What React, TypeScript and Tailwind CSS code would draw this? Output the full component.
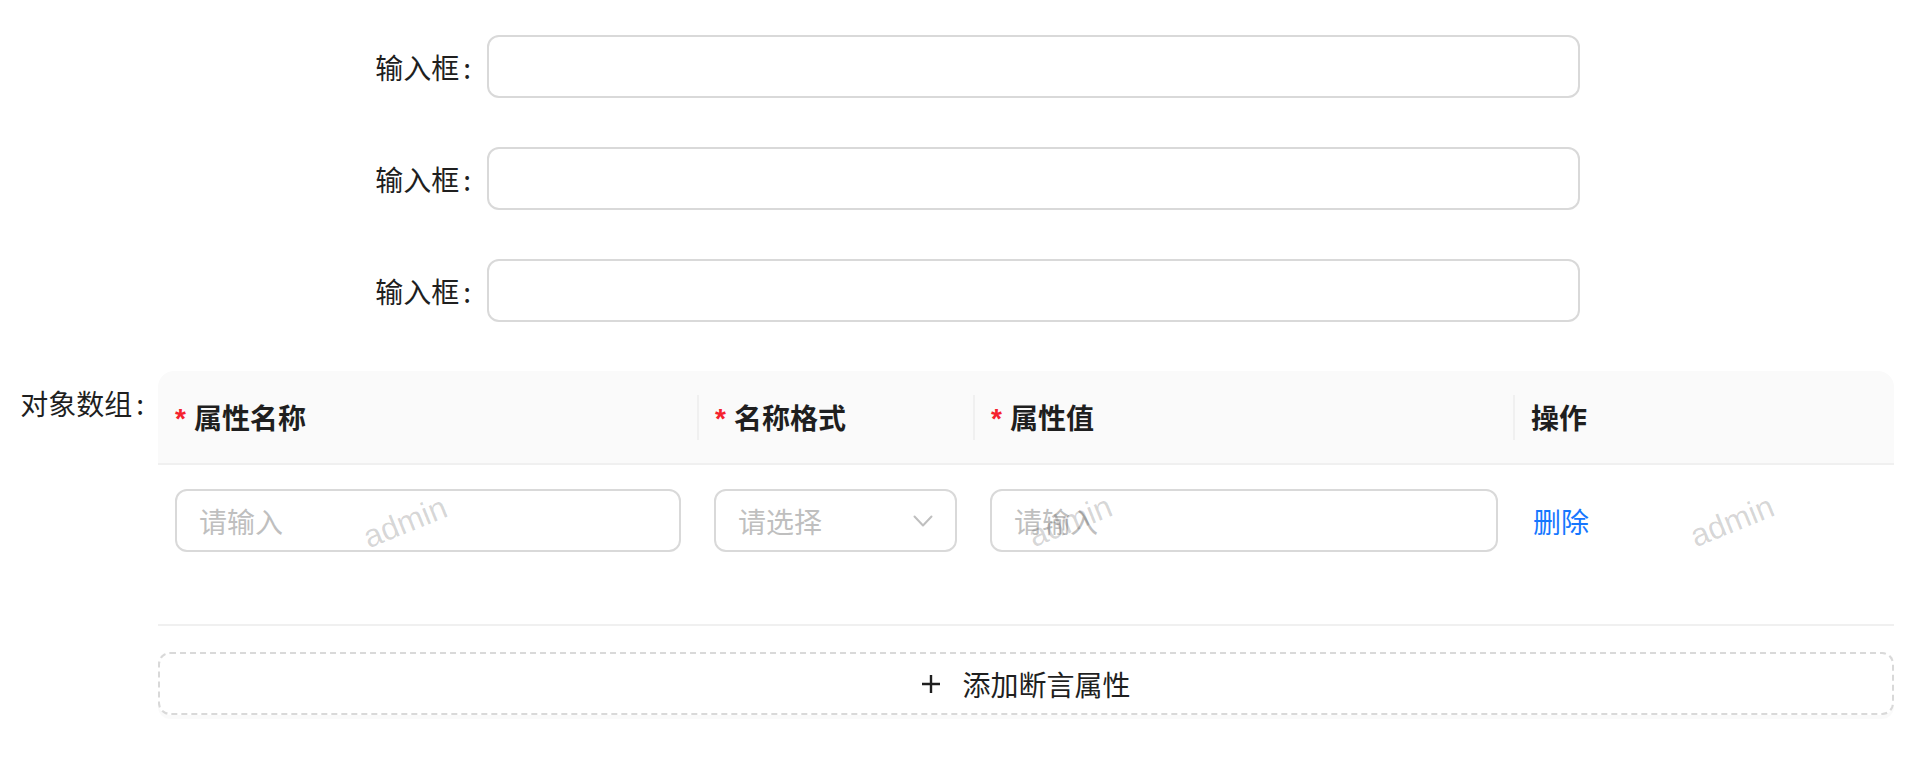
import React from 'react';

const font = "font-['Noto_Sans_CJK_SC','Liberation_Sans',sans-serif]";

function Star() {
  return (
    <span className="mr-[8px] translate-y-[2px] font-['Liberation_Sans',sans-serif] text-[28px] font-bold leading-none text-[#f5222d]">
      *
    </span>
  );
}

function HeadDivider() {
  return <div className="h-[45px] w-[2px] shrink-0 bg-[#f0f0f0]" />;
}

function Watermark({ left, top }: { left: number; top: number }) {
  return (
    <span
      className="pointer-events-none absolute -translate-x-1/2 -translate-y-1/2 rotate-[-22deg] select-none font-['Liberation_Sans',sans-serif] text-[32px] leading-none text-black/[0.17]"
      style={{ left, top }}
    >
      admin
    </span>
  );
}

export default function App() {
  return (
    <div className={`min-h-[770px] w-[1930px] bg-white pt-[35px] text-[#1f1f1f] ${font}`}>
      {[0, 1, 2].map((i) => (
        <div key={i} className="mb-[49px] flex items-center">
          <label className="flex w-[487px] justify-end pr-[16px] text-[28px] leading-none">
            输入框<span className="ml-[4px]">:</span>
          </label>
          <div className="h-[63px] w-[1093px] rounded-[12px] border-2 border-[#d9d9d9] bg-white" />
        </div>
      ))}

      <div className="flex items-start">
        <div className="flex h-[63px] w-[158px] items-center justify-end pr-[14px] text-[28px] leading-none">
          对象数组<span className="ml-[4px]">:</span>
        </div>

        <div className="w-[1736px]">
          {/* table head */}
          <div className="flex h-[94px] items-center rounded-t-[16px] border-b-2 border-[#f0f0f0] bg-[#fafafa] text-[28px] font-semibold leading-none">
            <div className="flex w-[539px] items-center pl-[17px]">
              <Star />
              属性名称
            </div>
            <HeadDivider />
            <div className="flex w-[274px] items-center pl-[16px]">
              <Star />
              名称格式
            </div>
            <HeadDivider />
            <div className="flex w-[538px] items-center pl-[16px]">
              <Star />
              属性值
            </div>
            <HeadDivider />
            <div className="flex flex-1 items-center pl-[16px]">操作</div>
          </div>

          {/* table body */}
          <div className="relative flex items-start border-b-2 border-[#f0f0f0] pb-[72px] pt-[24px] text-[28px]">
            <div className="w-[539px] pl-[17px]">
              <div className="flex h-[63px] w-[506px] items-center rounded-[12px] border-2 border-[#d9d9d9] pl-[22px] text-[#bfbfbf]">
                请输入
              </div>
            </div>
            <div className="w-[276px] pl-[17px]">
              <div className="flex h-[63px] w-[243px] items-center justify-between rounded-[12px] border-2 border-[#d9d9d9] pl-[22px] pr-[22px] text-[#bfbfbf]">
                <span>请选择</span>
                <svg width="20" height="12" viewBox="0 0 20 12" fill="none">
                  <polyline points="1.5,1.5 10,10.5 18.5,1.5" stroke="#bfbfbf" strokeWidth="2" strokeLinejoin="round" strokeLinecap="round" />
                </svg>
              </div>
            </div>
            <div className="w-[540px] pl-[17px]">
              <div className="flex h-[63px] w-[508px] items-center rounded-[12px] border-2 border-[#d9d9d9] pl-[22px] text-[#bfbfbf]">
                请输入
              </div>
            </div>
            <div className="flex h-[63px] flex-1 items-center pl-[20px] text-[#1677ff]">删除</div>

            <Watermark left={247} top={57} />
            <Watermark left={912} top={56} />
            <Watermark left={1574} top={56} />
          </div>

          {/* add button */}
          <button
            type="button"
            className="mt-[26px] flex h-[63px] w-full items-center justify-center gap-[21px] rounded-[12px] border-2 border-dashed border-[#d9d9d9] bg-white text-[28px] text-[#1f1f1f] shadow-[0_4px_0_rgba(0,0,0,0.02)]"
          >
            <svg width="20" height="20" viewBox="0 0 20 20" fill="none">
              <path d="M10 1v18M1 10h18" stroke="#1f1f1f" strokeWidth="2.4" />
            </svg>
            <span>添加断言属性</span>
          </button>
        </div>
      </div>
    </div>
  );
}
